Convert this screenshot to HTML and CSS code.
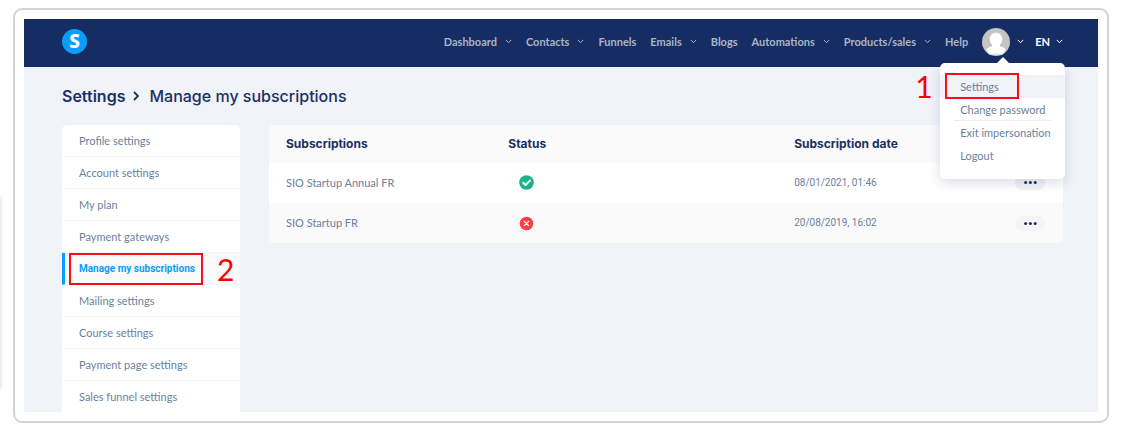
FILE: index.html
```html
<!DOCTYPE html>
<html lang="en">
<head>
<meta charset="utf-8">
<title>Manage my subscriptions</title>
<link rel="stylesheet" href="styles.css">
</head>
<body>
<svg class="sprite" aria-hidden="true">
  <symbol id="chevron" viewBox="0 0 7 5"><path d="M.8.9 3.5 3.7 6.2.9" fill="none" stroke="currentColor" stroke-width="1"/></symbol>
  <symbol id="dots" viewBox="0 0 13 3"><circle cx="1.6" cy="1.5" r="1.5"/><circle cx="6.4" cy="1.5" r="1.5"/><circle cx="11.2" cy="1.5" r="1.5"/></symbol>
</svg>
<div class="edge"></div>
<div class="frame">
  <div class="app">
    <header class="topbar">
      <a class="logo" href="#" aria-label="Home">S</a>
      <nav class="nav">
        <a href="#">Dashboard <svg class="chev"><use href="#chevron"/></svg></a>
        <a href="#">Contacts <svg class="chev"><use href="#chevron"/></svg></a>
        <a href="#">Funnels</a>
        <a href="#">Emails <svg class="chev"><use href="#chevron"/></svg></a>
        <a href="#">Blogs</a>
        <a href="#">Automations <svg class="chev"><use href="#chevron"/></svg></a>
        <a href="#">Products/sales <svg class="chev"><use href="#chevron"/></svg></a>
        <a href="#">Help</a>
      </nav>
      <div class="profile">
        <button class="profile-button" type="button" aria-label="Account menu">
          <svg class="avatar" viewBox="0 0 28 28"><circle cx="14" cy="14" r="14" fill="#c4c4c4"/><path d="M14 4.800c-3.700 0-6.300 2.600-6.300 6.200 0 2.300.8 4.300 2.300 5.600v1.600c-2.400.7-4.600 1.600-5.700 3.200a12.800 12.800 0 0 0 19.400 0c-1.100-1.600-3.300-2.500-5.700-3.200v-1.600c1.500-1.300 2.300-3.300 2.300-5.600 0-3.600-2.600-6.200-6.300-6.200z" fill="#fff"/><path d="M4.300 21.400a12.800 12.800 0 0 0 19.400 0l-3 5H7z" fill="#fff"/></svg>
          <svg class="chev"><use href="#chevron"/></svg>
        </button>
        <div class="menu">
          <a class="menu-item current" href="#">Settings</a>
          <a class="menu-item" href="#">Change password</a>
          <hr class="menu-line">
          <a class="menu-item" href="#">Exit impersonation</a>
          <a class="menu-item" href="#">Logout</a>
          <span class="mark mark-menu"></span>
          <span class="step step-menu">1</span>
        </div>
      </div>
      <button class="language" type="button">EN <svg class="chev"><use href="#chevron"/></svg></button>
    </header>
    <main class="page">
      <h1 class="title"><span class="title-root">Settings</span><svg class="title-arrow" viewBox="0 0 6 10"><path d="M1 1l4 4-4 4" fill="none" stroke="currentColor" stroke-width="1.800"/></svg><span>Manage my subscriptions</span></h1>
      <div class="columns">
        <nav class="sidebar">
          <a href="#">Profile settings</a>
          <a href="#">Account settings</a>
          <a href="#">My plan</a>
          <a href="#">Payment gateways</a>
          <a class="active" href="#">Manage my subscriptions<span class="mark mark-side"></span><span class="step step-side">2</span></a>
          <a href="#">Mailing settings</a>
          <a href="#">Course settings</a>
          <a href="#">Payment page settings</a>
          <a href="#">Sales funnel settings</a>
        </nav>
        <table class="subs">
          <thead>
            <tr><th class="col-name">Subscriptions</th><th class="col-status">Status</th><th>Subscription date</th><th class="col-action" aria-label="Actions"></th></tr>
          </thead>
          <tbody>
            <tr>
              <td>SIO Startup Annual FR</td>
              <td><svg class="state" viewBox="0 0 15 15" role="img" aria-label="Active"><circle cx="7.500" cy="7.500" r="7.300" fill="#1fb18a"/><path d="M4.200 7.700l2.400 2.400 4.300-4.500" fill="none" stroke="#fff" stroke-width="2" stroke-linecap="round" stroke-linejoin="round"/></svg></td>
              <td class="date">08/01/2021, 01:46</td>
              <td><button class="more" type="button" aria-label="More"><svg class="dots"><use href="#dots"/></svg></button></td>
            </tr>
            <tr>
              <td>SIO Startup FR</td>
              <td><svg class="state" viewBox="0 0 15 15" role="img" aria-label="Cancelled"><circle cx="7.500" cy="7.500" r="6.800" fill="#fa3e48"/><path d="M5.300 5.300l4.400 4.400M9.700 5.300 5.300 9.700" fill="none" stroke="#fff" stroke-width="1.200" stroke-linecap="round"/></svg></td>
              <td class="date">20/08/2019, 16:02</td>
              <td><button class="more" type="button" aria-label="More"><svg class="dots"><use href="#dots"/></svg></button></td>
            </tr>
          </tbody>
        </table>
      </div>
    </main>
  </div>
</div>
</body>
</html>
```
FILE: styles.css
```css
* { box-sizing: border-box; }
body { margin: 0; background: #fff; color: #6b7f9c; font: 11px/16px Lato, sans-serif; }
a { color: inherit; text-decoration: none; }
button { border: 0; padding: 0; background: none; color: inherit; font: inherit; }
.sprite { position: absolute; width: 0; height: 0; }
.edge { position: absolute; left: -8px; top: 198px; width: 8px; height: 190px; box-shadow: 0 0 4px rgba(0, 0, 0, .2); }
.frame { margin: 8px 17px 7px 13px; padding: 9px; border: 2px solid #d4d4d4; border-radius: 9px; }
.app { background: #f0f3f8; }

.topbar { display: flex; align-items: center; height: 48px; padding: 0 35px 3px 38px; background: #152d62; color: #a9b4c8; font-weight: 700; }
.logo { width: 25px; height: 25px; margin-right: auto; border-radius: 50%; background: #0a9dff; color: #fff; font: 800 19px/25px "Noto Sans", sans-serif; text-align: center; }
.nav { display: flex; gap: 14px; }
.nav a { display: flex; align-items: center; gap: 8px; }
.chev { width: 7px; height: 5px; flex: none; }
.profile { position: relative; margin-left: 14px; color: #fff; }
.profile-button { display: flex; align-items: center; gap: 7px; }
.avatar { width: 28px; height: 28px; }
.language { display: flex; align-items: center; gap: 6px; margin-left: 11px; color: #fff; }

.menu { position: absolute; z-index: 2; top: 35px; right: -41px; width: 125px; padding: 12px 0; border-radius: 5px; background: #fff; color: #6b7f9c; font-weight: 400; box-shadow: 0 4px 12px rgba(21, 44, 97, .16); }
.menu::before { content: ""; position: absolute; left: 57px; top: -6px; border: 6px solid transparent; border-top: 0; border-bottom-color: #fff; }
.menu-item { display: block; padding: 0 20px; line-height: 23px; white-space: nowrap; }
.menu-item.current { background: #f0f3f8; }
.menu-line { height: 1px; margin: -1px 14px 0; border: 0; background: #ececf0; }

.mark { position: absolute; border: 2px solid #fb0d1b; }
.step { position: absolute; color: #fe0000; font: 400 30px/32px Lato, sans-serif; }
.mark-menu { left: 5px; top: 10px; width: 74px; height: 26px; }
.step-menu { left: -25px; top: 7px; }
.mark-side { left: 4px; top: 0; width: 134px; height: 32px; }
.step-side { left: 152px; top: 0; }

.page { padding: 18px 35px 0 38px; }
.title { display: flex; align-items: center; gap: 8px; margin: 0 0 18px; color: #1b2f63; font: 500 16px/22px Inter, sans-serif; }
.title-root { font-weight: 600; }
.title-arrow { width: 6px; height: 10px; margin-right: 2px; }
.columns { display: flex; align-items: flex-start; gap: 29px; }
.sidebar { width: 178px; flex: none; background: #fff; border-radius: 5px 5px 0 0; }
.sidebar a { display: block; height: 32px; padding: 0 17px; border-bottom: 1px solid #f4f6f9; line-height: 32px; white-space: nowrap; }
.sidebar a:last-child { height: 31px; border: 0; }
.sidebar .active { position: relative; padding-left: 14px; border-left: 3px solid #0a9dff; background: #fafafb; color: #0a9dff; font: 700 10px/32px Roboto, sans-serif; }

.subs { flex: 1; table-layout: fixed; border-collapse: collapse; border-radius: 5px; overflow: hidden; background: #fff; }
.subs th { height: 37px; padding: 0 0 0 17px; color: #1b2f63; font: 700 12px/16px Inter, sans-serif; text-align: left; }
.subs td { height: 41px; padding: 0 0 0 17px; }
.subs .date { font: 10px/16px Roboto, sans-serif; }
.subs thead, .subs tbody tr:nth-child(2) { background: #fafafb; }
.subs tr:last-child td { height: 40px; }
.col-name { width: 28%; }
.col-status { width: 36%; }
.col-action { width: 65px; }
.state { display: block; width: 15px; height: 15px; margin-left: 11px; }
.more { display: flex; align-items: center; justify-content: center; width: 30px; height: 15px; border-radius: 7px; background: #f4f4f6; }
.dots { width: 13px; height: 3px; fill: #1b2f63; }
```
